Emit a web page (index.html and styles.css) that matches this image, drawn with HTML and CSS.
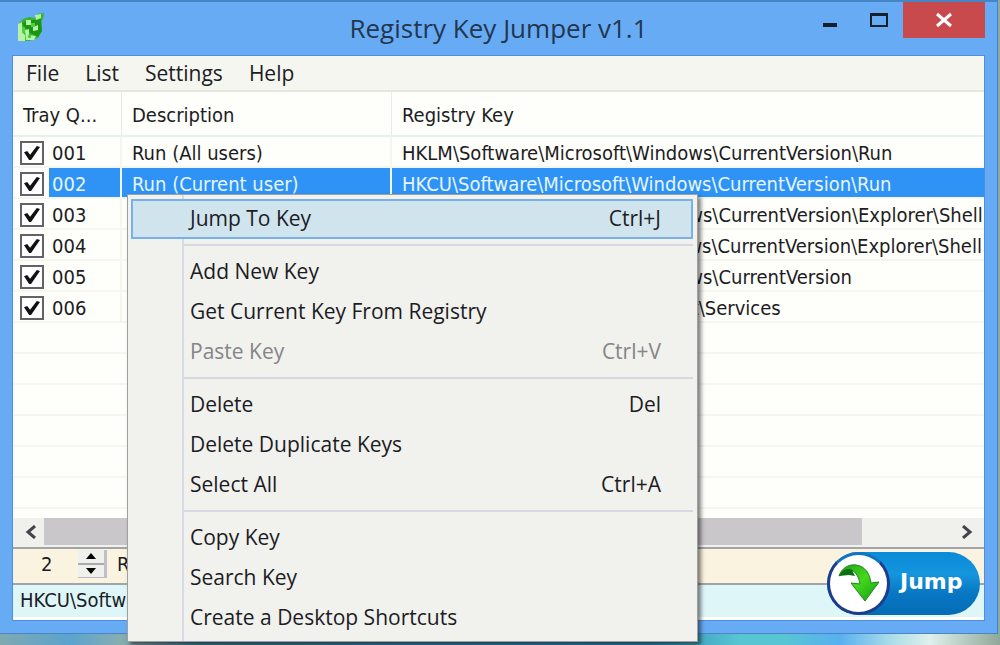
FILE: index.html
```html
<!DOCTYPE html>
<html lang="en">
<head>
<meta charset="utf-8">
<title>Registry Key Jumper v1.1</title>
<link rel="stylesheet" href="styles.css">
</head>
<body>
<main class="window">
  <header class="titlebar">
    <svg class="app-icon" viewBox="0 0 28 30" aria-hidden="true">
      <path fill="#35b52e" d="M2 10 6 6 12 4 18 5 20 1 27 0 26 6 24 9 25 18 21 25 12 28 1 28Z"/>
      <path fill="#1c9417" d="M11 7 17 7 24 6 25 18 21 24 13 20 8 15 5 10Z"/>
      <path fill="#b6f3a2" d="M9 7h5v5H9zM18 2l6-1v4l-5 2zM16 14l5-2v5l-5 1zM1 11l4-2v10l3 3v6H1zM8 17l4-1v6l7 1-2 4H9z"/>
      <path fill="#4fd044" d="M14 10h4v4h-4zM5 14h3v6H5zM11 22h3v3h-3z"/>
    </svg>
    <h1 class="title">Registry Key Jumper v1.1</h1>
    <div class="caption-buttons">
      <button class="caption" aria-label="Minimize"><svg width="16" height="18" viewBox="0 0 16 18"><path fill="#16202c" d="M1 12h14v4H1z"/></svg></button>
      <button class="caption" aria-label="Maximize"><svg width="20" height="18" viewBox="0 0 20 18"><path fill="none" stroke="#16202c" stroke-width="2" d="M2 3h16v12H2z"/><path fill="#16202c" d="M1 2h18v3H1z"/></svg></button>
      <button class="caption close" aria-label="Close"><svg width="18" height="16" viewBox="0 0 18 16"><path stroke="#fff" stroke-width="3" d="M2 2l14 12M16 2L2 14"/></svg></button>
    </div>
  </header>

  <section class="client">
    <nav class="menubar">
      <button>File</button><button>List</button><button>Settings</button><button>Help</button>
    </nav>

    <div class="list">
      <table class="keys">
        <colgroup><col class="c-tray"><col class="c-desc"><col></colgroup>
        <thead><tr><th>Tray Q...</th><th>Description</th><th>Registry Key</th></tr></thead>
        <tbody>
          <tr><td><label><input type="checkbox" checked><span>001</span></label></td><td>Run (All users)</td><td>HKLM\Software\Microsoft\Windows\CurrentVersion\Run</td></tr>
          <tr class="selected"><td><label><input type="checkbox" checked><span>002</span></label></td><td>Run (Current user)</td><td>HKCU\Software\Microsoft\Windows\CurrentVersion\Run</td></tr>
          <tr><td><label><input type="checkbox" checked><span>003</span></label></td><td></td><td>HKLM\Software\Microsoft\Windows\CurrentVersion\Explorer\Shell Folders</td></tr>
          <tr><td><label><input type="checkbox" checked><span>004</span></label></td><td></td><td>HKCU\Software\Microsoft\Windows\CurrentVersion\Explorer\Shell Folders</td></tr>
          <tr><td><label><input type="checkbox" checked><span>005</span></label></td><td></td><td>HKLM\Software\Microsoft\Windows\CurrentVersion</td></tr>
          <tr><td><label><input type="checkbox" checked><span>006</span></label></td><td></td><td>HKLM\SYSTEM\CurrentControlSet\Services</td></tr>
        </tbody>
      </table>
      <div class="blank-rows"></div>
    </div>

    <div class="scrollbar">
      <button aria-label="Scroll left"><svg width="12" height="14" viewBox="0 0 12 14"><path fill="none" stroke="#44444a" stroke-width="3" d="M10 1L3 7l7 6"/></svg></button>
      <div class="track"><div class="thumb"></div></div>
      <button aria-label="Scroll right"><svg width="12" height="14" viewBox="0 0 12 14"><path fill="none" stroke="#44444a" stroke-width="3" d="M2 1l7 6-7 6"/></svg></button>
    </div>

    <footer class="bottom">
      <div class="current">
        <input class="number" value="2" aria-label="Key number">
        <div class="spinner">
          <button aria-label="Next"><svg width="12" height="6" viewBox="0 0 12 6"><path d="M6 0l5 6H1z"/></svg></button>
          <button aria-label="Previous"><svg width="12" height="6" viewBox="0 0 12 6"><path d="M1 0h10L6 6z"/></svg></button>
        </div>
        <span>Run (Current user)</span>
      </div>
      <div class="path">HKCU\Software\Microsoft\Windows\CurrentVersion\Run</div>
      <button class="jump">
        <span class="disc"><svg width="42" height="42" viewBox="0 0 42 42">
          <defs><linearGradient id="leaf" x1="0" y1="0" x2="1" y2="1"><stop offset="0" stop-color="#249c14"/><stop offset=".5" stop-color="#43d91c"/><stop offset="1" stop-color="#189a18"/></linearGradient></defs>
          <path fill="url(#leaf)" stroke="#188a18" d="M1 13C4 4 12 1 18 2c9 1 14 9 15 18l8-1-14 19-14-18 9 1C21 14 18 9 12 6z"/>
          <path fill="#0a6f12" d="M1 13C5 6 9 5 14 7l3 6-6-1z"/>
        </svg></span>
        <span class="jump-text">Jump</span>
      </button>
    </footer>
  </section>
</main>

<div class="context-menu" role="menu">
  <button role="menuitem" class="hot"><span>Jump To Key</span><span>Ctrl+J</span></button>
  <hr>
  <button role="menuitem"><span>Add New Key</span></button>
  <button role="menuitem"><span>Get Current Key From Registry</span></button>
  <button role="menuitem" disabled><span>Paste Key</span><span>Ctrl+V</span></button>
  <hr>
  <button role="menuitem"><span>Delete</span><span>Del</span></button>
  <button role="menuitem"><span>Delete Duplicate Keys</span></button>
  <button role="menuitem"><span>Select All</span><span>Ctrl+A</span></button>
  <hr>
  <button role="menuitem"><span>Copy Key</span></button>
  <button role="menuitem"><span>Search Key</span></button>
  <button role="menuitem"><span>Create a Desktop Shortcuts</span></button>
</div>
</body>
</html>
```
FILE: styles.css
```css
* { box-sizing: border-box; }

body {
  margin: 0;
  min-height: 100vh;
  display: flex;
  padding: 0 2px 11px 0;
  overflow: hidden;
  color: #1c1c24;
  font-family: "Open Sans", "Noto Sans", sans-serif;
  font-size: 21px;
  background: linear-gradient(90deg, #7fa9b0 0, #5ba3cf 7%, #86aeb0 12%, #3f7f9c 20%, #2f88b4 65%, #58c6d2 74%, #58c6d2 78%, #58b0f0 84%, #a9dce8 89%, #dff0ec 93%, #8fa897 100%);
}

button {
  border: 0;
  padding: 0;
  margin: 0;
  background: none;
  color: inherit;
  font: inherit;
}

svg { display: block; }

/* Window frame */
.window {
  flex: 1;
  min-width: 0;
  display: flex;
  flex-direction: column;
  padding: 0 12px 12px;
  border-top: 2px solid #4685c6;
  border-right: 1px solid #3f85cf;
  border-bottom: 1px solid #4b86c4;
  background: #68abf5;
}

.titlebar {
  display: grid;
  grid-template-columns: 1fr auto 1fr;
  align-items: start;
  height: 53px;
}

.app-icon { width: 28px; height: 30px; margin: 11px 0 0 5px; }

.title {
  margin: 0;
  font-size: 26px;
  font-weight: 400;
  line-height: 52px;
  color: #23364f;
}

.caption-buttons { display: flex; justify-content: flex-end; }

.caption {
  width: 49px;
  height: 36px;
  display: flex;
  align-items: center;
  justify-content: center;
}

.close { width: 82px; background: #c94a4c; }

/* Client area */
.client {
  flex: 1;
  min-height: 0;
  display: flex;
  flex-direction: column;
  border: 1px solid #4e8fdd;
  background: #fff;
}

.menubar {
  display: flex;
  gap: 26px;
  height: 36px;
  padding: 0 13px;
  border-bottom: 2px solid #e6e6e0;
  background: #f6f6f0;
}

.list {
  flex: 1;
  min-height: 0;
  display: flex;
  flex-direction: column;
  overflow: hidden;
  font-family: "DejaVu Sans Condensed", "DejaVu Sans", sans-serif;
  font-size: 20px;
}

.keys {
  width: 100%;
  table-layout: fixed;
  border-collapse: separate;
  border-spacing: 0;
}

.c-tray { width: 109px; }
.c-desc { width: 270px; }

.keys th {
  height: 45px;
  padding: 2px 10px 0;
  border-bottom: 2px solid #e8f0ee;
  border-right: 1px solid #e3ecea;
  font-weight: 400;
  text-align: left;
  background: #fefefb;
}

.keys th:last-child { border-right: 0; }

.keys td {
  height: 31px;
  padding: 3px 10px 0;
  overflow: hidden;
  white-space: nowrap;
  line-height: 26px;
  border-bottom: 2px solid #f6f6f0;
  border-right: 2px solid #f6f6f0;
  background: #fefefa;
}

.keys td:first-child { padding-left: 7px; padding-right: 0; }
.keys td:last-child { border-right: 0; }

.keys label { display: flex; align-items: center; gap: 5px; }
.keys label span { flex: 1; padding-left: 3px; }

.keys input {
  appearance: none;
  width: 24px;
  height: 24px;
  margin: 0;
  border: 2px solid #626268;
  background: #fff;
  display: grid;
  place-items: center;
}

.keys input:checked::before {
  content: "";
  width: 16px;
  height: 14px;
  background: #111;
  clip-path: polygon(0 45%, 20% 35%, 38% 62%, 80% 0, 100% 8%, 44% 100%, 32% 100%);
}

.keys .selected td {
  color: #e6f5ff;
  background: #2e93f5;
}

.keys .selected td:first-child { background: linear-gradient(90deg, #fff 36px, #2e93f5 36px); }

.blank-rows {
  flex: 1;
  background: repeating-linear-gradient(#fefefa 0 29px, #f6f6f0 29px 31px);
}

.scrollbar {
  display: flex;
  height: 29px;
  padding: 0 4px 2px;
  background: #f0f0ed;
}

.scrollbar button { width: 27px; display: grid; place-items: center; }
.track { flex: 1; display: flex; }
.thumb { width: 90%; background: #c9c7ca; }

.bottom { position: relative; }

.current {
  display: flex;
  align-items: center;
  height: 38px;
  padding-bottom: 4px;
  border: solid #a3a3ab;
  border-width: 2px 0;
  background: #faf3df;
  font-family: "DejaVu Sans Condensed", "DejaVu Sans", sans-serif;
  font-size: 20px;
}

.number {
  width: 65px;
  padding: 0 0 0 28px;
  border: 0;
  background: none;
  color: inherit;
  font: inherit;
}

.spinner {
  width: 29px;
  height: 28px;
  margin-right: 10px;
  display: grid;
  border-right: 3px solid #c0c0c8;
  border-bottom: 1px solid #b9b9c4;
  background: #f0f0ec;
}

.spinner button { display: grid; place-items: center; }
.spinner button:first-child { border-bottom: 2px solid #a9a9b0; }

.path {
  height: 35px;
  padding-left: 7px;
  line-height: 31px;
  border-bottom: 3px solid #fff;
  background: #def6f8;
  font-family: "DejaVu Sans Condensed", "DejaVu Sans", sans-serif;
  font-size: 20px;
}

/* Overlaps both status rows */
.jump {
  position: absolute;
  right: 4px;
  top: 5px;
  width: 153px;
  height: 63px;
  display: flex;
  align-items: center;
  border-radius: 32px;
  background: linear-gradient(#0b8bd8, #1595dc 35%, #0877c4 65%, #056bb4);
}

.disc {
  width: 63px;
  height: 63px;
  display: grid;
  place-items: center;
  border: 3px solid #1c3c8c;
  border-top-color: #1273c0;
  border-radius: 50%;
  background: #fff;
}

.jump-text {
  padding: 0 0 4px 10px;
  color: #fff;
  font-family: "DejaVu Sans", sans-serif;
  font-size: 22px;
  font-weight: 700;
}

/* Context menu */
.context-menu {
  position: absolute;
  left: 127px;
  top: 194px;
  width: 571px;
  display: flex;
  flex-direction: column;
  padding: 4px 4px 3px 3px;
  border: 1px solid #a09fa2;
  background: linear-gradient(90deg, #f1f1ed 54px, #d8dae6 54px 56px, #f1f1ed 56px);
  box-shadow: 3px 3px 4px #00000080;
}

.context-menu button {
  display: flex;
  justify-content: space-between;
  align-items: center;
  height: 40px;
  padding: 0 32px 2px 59px;
}

.context-menu .hot { border: 2px solid #78b0ea; padding: 0 30px 2px 57px; background: #d0e4ee; }
.context-menu button:disabled { color: #85858a; }

.context-menu hr {
  width: calc(100% - 53px);
  height: 2px;
  margin: 5px 0 6px 53px;
  border: 0;
  background: #d6d8e2;
}
```
